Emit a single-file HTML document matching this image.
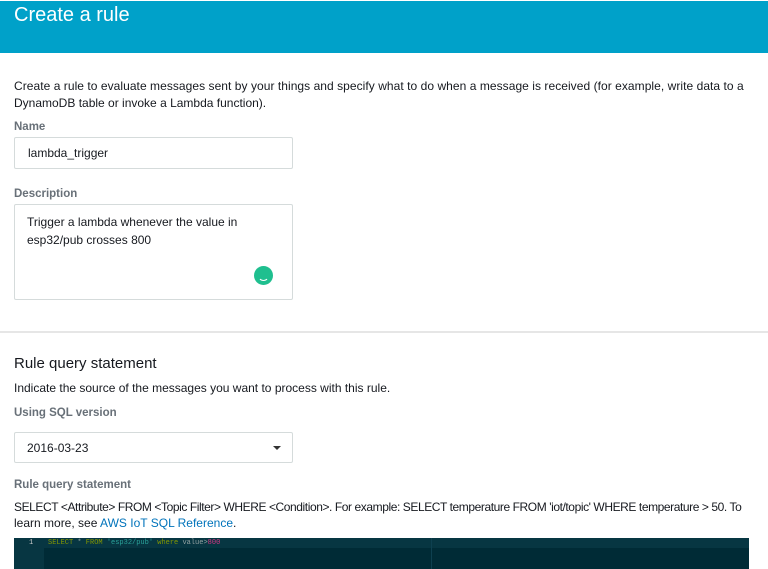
<!DOCTYPE html>
<html><head><style>
body{margin:0;width:768px;height:569px;overflow:hidden;background:#fff;font-family:"Liberation Sans",sans-serif;color:#16191f;position:relative}
.a{position:absolute;white-space:nowrap}
.hdr{position:absolute;left:0;top:1px;width:768px;height:52px;background:#00a1c9}
.t{font-size:12px;color:#16191f}
.lbl{font-size:11.5px;font-weight:bold;color:#687078}
.box{position:absolute;border:1px solid #d5dbdb;background:#fff;box-sizing:border-box;border-radius:2px}
</style></head><body>
<div class="hdr"></div>
<div class="a" style="left:14px;top:4px;font-size:20px;color:#fff">Create a rule</div>
<div class="a t" style="left:14px;top:79px;letter-spacing:0.05px">Create a rule to evaluate messages sent by your things and specify what to do when a message is received (for example, write data to a</div>
<div class="a t" style="left:14px;top:96px">DynamoDB table or invoke a Lambda function).</div>
<div class="a lbl" style="left:14px;top:121px">Name</div>
<div class="box" style="left:14px;top:137px;width:279px;height:32px"></div>
<div class="a t" style="left:28px;top:146px">lambda_trigger</div>
<div class="a lbl" style="left:14px;top:188px">Description</div>
<div class="box" style="left:14px;top:204px;width:279px;height:96px"></div>
<div class="a t" style="left:27px;top:215px">Trigger a lambda whenever the value in</div>
<div class="a t" style="left:27px;top:233px">esp32/pub crosses 800</div>
<div class="a" style="left:254px;top:266px;width:19px;height:19px;border-radius:50%;background:#1fbf8f"></div>
<div class="a" style="left:258px;top:270px;width:11px;height:11px;border-radius:50%;border:1.5px solid transparent;border-bottom-color:#fff;box-sizing:border-box"></div>
<div class="a" style="left:0;top:331px;width:768px;height:2px;background:#e6e6e6"></div>
<div class="a" style="left:14px;top:355px;font-size:15px;color:#16191f">Rule query statement</div>
<div class="a t" style="left:14px;top:381px">Indicate the source of the messages you want to process with this rule.</div>
<div class="a lbl" style="left:14px;top:407px">Using SQL version</div>
<div class="box" style="left:14px;top:432px;width:279px;height:31px"></div>
<div class="a t" style="left:27px;top:441px">2016-03-23</div>
<div class="a" style="left:273px;top:446px;width:0;height:0;border-left:4px solid transparent;border-right:4px solid transparent;border-top:4px solid #333"></div>
<div class="a lbl" style="left:14px;top:479px">Rule query statement</div>
<div class="a t" style="left:14px;top:500px;letter-spacing:-0.42px">SELECT &lt;Attribute&gt; FROM &lt;Topic Filter&gt; WHERE &lt;Condition&gt;. For example: SELECT temperature FROM 'iot/topic' WHERE temperature &gt; 50. To</div>
<div class="a t" style="left:14px;top:516px">learn more, see <span style="color:#0073bb">AWS IoT SQL Reference</span>.</div>
<div class="a" style="left:14px;top:538px;width:735px;height:31px;background:#002b36"></div>
<div class="a" style="left:14px;top:538px;width:30px;height:31px;background:#073642"></div>
<div class="a" style="left:44px;top:538px;width:705px;height:10px;background:#073642"></div>
<div class="a" style="left:431px;top:538px;width:1px;height:31px;background:#0e4050"></div>
<div class="a" style="left:29px;top:539px;font-family:'Liberation Mono',monospace;font-size:7px;color:#ccc">1</div>
<div class="a" style="left:48px;top:539px;font-family:'Liberation Mono',monospace;font-size:7px;color:#859900">SELECT <span style="color:#93a1a1">*</span> FROM <span style="color:#2aa198">'esp32/pub'</span> where <span style="color:#93a1a1">value&gt;</span><span style="color:#d33682">800</span></div>
</body></html>
